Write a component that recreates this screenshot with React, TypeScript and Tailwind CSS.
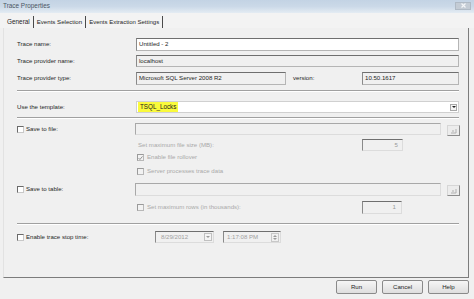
import React from "react";

const font = { fontFamily: '"Liberation Sans", Arial, sans-serif' };

const Sunken = ({
  className,
  children,
}: {
  className: string;
  children?: React.ReactNode;
}) => (
  <div
    className={`flex items-center border border-[#b5b5b5] border-t-[#6f6f6f] border-l-[#8a8a8a] px-[2px] ${className}`}
  >
    {children}
  </div>
);

const Check = ({ checked, disabled }: { checked?: boolean; disabled?: boolean }) => (
  <div
    className={`w-[7px] h-[7px] shrink-0 flex items-center justify-center border ${
      disabled
        ? "border-[#b8b8b8] border-t-[#9a9a9a] border-l-[#9a9a9a] bg-[#f2f2f2]"
        : "border-[#c8c8c8] border-t-[#6a6a6a] border-l-[#6a6a6a] bg-white"
    }`}
  >
    {checked && (
      <svg width="6" height="6" viewBox="0 0 6 6">
        <path d="M0.6 3 L2.3 4.8 L5.4 1" fill="none" stroke="#8d8d8d" strokeWidth="1.1" />
      </svg>
    )}
  </div>
);

const Browse = () => (
  <div className="w-[13px] h-[11px] mt-[2px] flex items-center justify-center border border-[#d6d6d6] border-r-[#8c8c8c] border-b-[#8c8c8c] bg-[#ececec]">
    <svg width="7" height="6" viewBox="0 0 7 6">
      <path d="M1 5 L6 5 M6 1 L6 5 M2 3 L4 3" stroke="#b0b0b0" strokeWidth="1" fill="none" />
    </svg>
  </div>
);

const Sep = ({ className }: { className: string }) => (
  <div className={`mr-[9px] ml-[13px] h-[2px] border-t border-[#a0a0a0] bg-white ${className}`} />
);

const Label = ({ children }: { children: React.ReactNode }) => (
  <div className="w-[119px] shrink-0 text-[6.1px] text-[#262626]">{children}</div>
);

const App = () => {
  return (
    <div
      style={font}
      className="w-[474px] h-[299px] bg-[#f0f0f0] flex flex-col overflow-hidden leading-none"
    >
      {/* title bar */}
      <div className="h-[13px] shrink-0 flex items-center justify-between pl-[3px] pr-[3px] bg-gradient-to-b from-[#c3d3e4] via-[#cbd9e8] to-[#e4ecf3]">
        <span className="text-[6.4px] text-[#4a5663]">Trace Properties</span>
        <div className="w-[16px] h-[8px] mb-[2px] flex items-center justify-center bg-[#c4ccd5] border border-[#b0bac5]">
          <svg width="5" height="5" viewBox="0 0 5 5">
            <path d="M0.5 0.5 L4.5 4.5 M4.5 0.5 L0.5 4.5" stroke="#f4f6f8" strokeWidth="1.2" />
          </svg>
        </div>
      </div>

      {/* tabs */}
      <div className="h-[15px] shrink-0 flex items-end pl-[4px] bg-[#f3f3f3]">
        <div className="h-[12px] px-[3px] flex items-center text-[6.4px] text-[#262626] border-r border-[#4a4a4a]">
          General
        </div>
        <div className="h-[12px] px-[3px] flex items-center text-[6.1px] text-[#262626] border-r border-[#4a4a4a]">
          Events Selection
        </div>
        <div className="h-[12px] px-[3px] flex items-center text-[6px] text-[#262626] border-r border-[#4a4a4a]">
          Events Extraction Settings
        </div>
      </div>

      {/* panel */}
      <div className="flex-1 mx-[3px] w-[466px] flex flex-col pt-[10px] border-r border-b border-[#7c7c7c] border-l border-l-[#e2e2e2]">
        <div className="h-[13px] flex items-center pl-[13px] pr-[9px]">
          <Label>Trace name:</Label>
          <Sunken className="flex-1 h-full bg-white text-[6.1px] text-[#262626]">Untitled - 2</Sunken>
        </div>
        <div className="mt-[4px] h-[12px] flex items-center pl-[13px] pr-[9px]">
          <Label>Trace provider name:</Label>
          <Sunken className="flex-1 h-full text-[6.1px] text-[#262626]">localhost</Sunken>
        </div>
        <div className="mt-[5px] h-[13px] flex items-center pl-[13px] pr-[9px]">
          <Label>Trace provider type:</Label>
          <Sunken className="w-[150px] h-full text-[6.1px] text-[#262626]">Microsoft SQL Server 2008 R2</Sunken>
          <div className="ml-[7px] w-[69px] text-[6.1px] text-[#262626]">version:</div>
          <Sunken className="flex-1 h-full text-[6.1px] text-[#262626]">10.50.1617</Sunken>
        </div>

        <Sep className="mt-[5px]" />

        <div className="mt-[9px] h-[12px] flex items-center pl-[13px] pr-[9px]">
          <Label>Use the template:</Label>
          <div className="flex-1 h-full flex items-center bg-white border border-[#d0d0d0] pl-[1px] pr-[1px]">
            <span className="bg-[#fafa3c] h-[10px] px-[2px] flex items-center text-[6.3px] text-[#1a1a1a]">
              TSQL_Locks
            </span>
            <div className="ml-auto w-[7px] h-[7px] flex items-center justify-center border border-[#a8a8a8] bg-[#f4f4f4]">
              <svg width="4" height="2" viewBox="0 0 4 2">
                <path d="M0 0 L4 0 L2 2 Z" fill="#222" />
              </svg>
            </div>
          </div>
        </div>

        <Sep className="mt-[4px]" />

        <div className="mt-[4px] h-[12px] flex items-start pl-[13px] pr-[8px]">
          <div className="w-[119px] h-full flex items-center gap-[2px]">
            <Check />
            <span className="text-[6.1px] text-[#262626]">Save to file:</span>
          </div>
          <Sunken className="w-[307px] h-full border-t-[#a8a8a8] border-l-[#a8a8a8] border-r-[#dcdcdc] border-b-[#dcdcdc]" />
          <div className="ml-[6px]">
            <Browse />
          </div>
        </div>
        <div className="mt-[4px] h-[12px] flex items-center pl-[134px]">
          <div className="w-[224px] text-[6.1px] text-[#a9a9a9]">Set maximum file size (MB):</div>
          <Sunken className="w-[41px] h-full justify-end pr-[4px] border-r-[#dcdcdc] border-b-[#dcdcdc] text-[6.1px] text-[#9a9a9a]">
            5
          </Sunken>
        </div>
        <div className="mt-[2px] h-[9px] flex items-center pl-[133px] gap-[3px]">
          <Check checked disabled />
          <span className="text-[6.1px] text-[#a9a9a9]">Enable file rollover</span>
        </div>
        <div className="mt-[5px] h-[9px] flex items-center pl-[133px] gap-[3px]">
          <Check disabled />
          <span className="text-[6.1px] text-[#a9a9a9]">Server processes trace data</span>
        </div>

        <div className="mt-[7px] h-[13px] flex items-start pl-[13px] pr-[8px]">
          <div className="w-[119px] h-full flex items-center gap-[2px]">
            <Check />
            <span className="text-[6.1px] text-[#262626]">Save to table:</span>
          </div>
          <Sunken className="w-[307px] h-full border-t-[#a8a8a8] border-l-[#a8a8a8] border-r-[#dcdcdc] border-b-[#dcdcdc]" />
          <div className="ml-[6px]">
            <Browse />
          </div>
        </div>
        <div className="mt-[5px] h-[13px] flex items-center pl-[133px]">
          <div className="flex items-center gap-[3px] w-[225px]">
            <Check disabled />
            <span className="text-[6.1px] text-[#a9a9a9]">Set maximum rows (in thousands):</span>
          </div>
          <Sunken className="w-[40px] h-full justify-end pr-[5px] border-r-[#dcdcdc] border-b-[#dcdcdc] text-[6.1px] text-[#9a9a9a]">
            1
          </Sunken>
        </div>

        <Sep className="mt-[9px]" />

        <div className="mt-[6px] h-[12px] flex items-center pl-[13px]">
          <div className="w-[138px] h-full flex items-center gap-[2px]">
            <Check />
            <span className="text-[6.1px] text-[#262626]">Enable trace stop time:</span>
          </div>
          <Sunken className="w-[59px] h-full pl-[5px] pr-[1px] border-r-[#dcdcdc] border-b-[#dcdcdc] text-[6.1px] text-[#a0a0a0]">
            <span>8/29/2012</span>
            <div className="ml-auto w-[8px] h-[8px] flex items-center justify-center border border-[#c0c0c0] bg-[#f4f4f4]">
              <svg width="4" height="2" viewBox="0 0 4 2">
                <path d="M0 0 L4 0 L2 2 Z" fill="#9a9a9a" />
              </svg>
            </div>
          </Sunken>
          <Sunken className="ml-[9px] w-[58px] h-full pl-[3px] pr-[1px] border-r-[#dcdcdc] border-b-[#dcdcdc] text-[6.1px] text-[#a0a0a0]">
            <span>1:17:08 PM</span>
            <div className="ml-auto w-[8px] h-[9px] flex flex-col items-center justify-center gap-[1px] border border-[#c8c8c8]">
              <svg width="4" height="2" viewBox="0 0 4 2">
                <path d="M0 2 L4 2 L2 0 Z" fill="#9a9a9a" />
              </svg>
              <svg width="4" height="2" viewBox="0 0 4 2">
                <path d="M0 0 L4 0 L2 2 Z" fill="#9a9a9a" />
              </svg>
            </div>
          </Sunken>
        </div>
      </div>

      {/* buttons */}
      <div className="h-[21px] shrink-0 flex items-start justify-end gap-[5px] pt-[2px] pr-[5px]">
        {["Run", "Cancel", "Help"].map((b) => (
          <button
            key={b}
            className="w-[41px] h-[14px] flex items-center justify-center rounded-[2px] border border-[#8a8a8a] bg-gradient-to-b from-[#f6f6f6] to-[#dedede] text-[6.1px] text-[#262626]"
          >
            {b}
          </button>
        ))}
      </div>
    </div>
  );
};

export default App;
